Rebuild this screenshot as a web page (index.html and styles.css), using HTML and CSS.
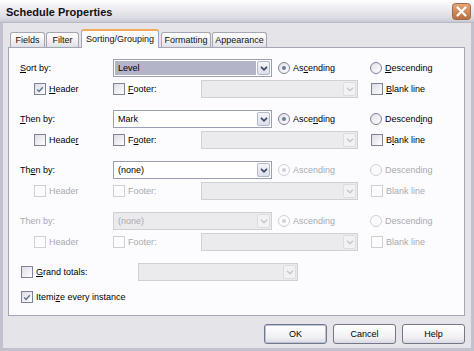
FILE: index.html
```html
<!DOCTYPE html>
<html lang="en">
<head>
    <meta charset="UTF-8">
    <title>Schedule Properties</title>
    <link rel="stylesheet" href="styles.css">
</head>
<body>
    <div class="dialog">
        <div class="titlebar">
            <span class="title">Schedule Properties</span>
            <span class="close-btn">
                <svg width="19" height="17" viewBox="0 0 19 17">
                    <defs>
                        <linearGradient id="cg" x1="0" y1="0" x2="0" y2="1">
                            <stop offset="0" stop-color="#e6a77a"/>
                            <stop offset="1" stop-color="#b86d3c"/>
                        </linearGradient>
                    </defs>
                    <rect x="0.5" y="0.5" width="18" height="16" rx="3" fill="url(#cg)" stroke="#9c6a4a"/>
                    <path d="M5.5 4.5 L13.5 12.5 M13.5 4.5 L5.5 12.5" stroke="#fff" stroke-width="2.2" stroke-linecap="round"/>
                </svg>
            </span>
        </div>

        <div class="body">
            <div class="tabs">
                <div class="tab" style="width: 35px">Fields</div>
                <div class="tab" style="width: 33px">Filter</div>
                <div class="tab active">Sorting/Grouping</div>
                <div class="tab" style="width: 50px">Formatting</div>
                <div class="tab" style="width: 55px">Appearance</div>
            </div>

            <div class="panel">
                <!-- sort by -->
                <div class="group">
                    <div class="main-row">
                        <span><u>S</u>ort by:</span>
                        <div class="combo selected">
                            <span class="combo-text">Level</span>
                            <span class="combo-arrow"><svg width="8" height="5" viewBox="0 0 8 5"><path d="M1 0.8 L4 3.8 L7 0.8" fill="none" stroke="currentColor" stroke-width="1.7"/></svg></span>
                        </div>
                        <label class="radio checked"><span class="dot"></span>As<u>c</u>ending</label>
                        <label class="radio"><span class="dot"></span><u>D</u>escending</label>
                    </div>
                    <div class="sub-row">
                        <label class="check checked"><span class="box"><svg width="11" height="11" viewBox="0 0 11 11"><path d="M2.5 5.5 L4.5 7.7 L8.6 3" fill="none" stroke="currentColor" stroke-width="1.6"/></svg></span><u>H</u>eader</label>
                        <label class="check"><span class="box"></span><u>F</u>ooter:</label>
                        <div class="combo disabled wide">
                            <span class="combo-text"></span>
                            <span class="combo-arrow"><svg width="8" height="5" viewBox="0 0 8 5"><path d="M1 0.8 L4 3.8 L7 0.8" fill="none" stroke="currentColor" stroke-width="1.5"/></svg></span>
                        </div>
                        <label class="check"><span class="box"></span><u>B</u>lank line</label>
                    </div>
                </div>

                <!-- then by 1 -->
                <div class="group">
                    <div class="main-row">
                        <span><u>T</u>hen by:</span>
                        <div class="combo">
                            <span class="combo-text">Mark</span>
                            <span class="combo-arrow"><svg width="8" height="5" viewBox="0 0 8 5"><path d="M1 0.8 L4 3.8 L7 0.8" fill="none" stroke="currentColor" stroke-width="1.7"/></svg></span>
                        </div>
                        <label class="radio checked"><span class="dot"></span>Asce<u>n</u>ding</label>
                        <label class="radio"><span class="dot"></span>Descend<u>i</u>ng</label>
                    </div>
                    <div class="sub-row">
                        <label class="check"><span class="box"></span>Heade<u>r</u></label>
                        <label class="check"><span class="box"></span>F<u>o</u>oter:</label>
                        <div class="combo disabled wide">
                            <span class="combo-text"></span>
                            <span class="combo-arrow"><svg width="8" height="5" viewBox="0 0 8 5"><path d="M1 0.8 L4 3.8 L7 0.8" fill="none" stroke="currentColor" stroke-width="1.5"/></svg></span>
                        </div>
                        <label class="check"><span class="box"></span>B<u>l</u>ank line</label>
                    </div>
                </div>

                <!-- then by 2 -->
                <div class="group">
                    <div class="main-row">
                        <span>Th<u>e</u>n by:</span>
                        <div class="combo">
                            <span class="combo-text">(none)</span>
                            <span class="combo-arrow"><svg width="8" height="5" viewBox="0 0 8 5"><path d="M1 0.8 L4 3.8 L7 0.8" fill="none" stroke="currentColor" stroke-width="1.7"/></svg></span>
                        </div>
                        <label class="radio checked off"><span class="dot"></span>Ascending</label>
                        <label class="radio off"><span class="dot"></span>Descending</label>
                    </div>
                    <div class="sub-row off">
                        <label class="check"><span class="box"></span>Header</label>
                        <label class="check"><span class="box"></span>Footer:</label>
                        <div class="combo disabled wide">
                            <span class="combo-text"></span>
                            <span class="combo-arrow"><svg width="8" height="5" viewBox="0 0 8 5"><path d="M1 0.8 L4 3.8 L7 0.8" fill="none" stroke="currentColor" stroke-width="1.5"/></svg></span>
                        </div>
                        <label class="check"><span class="box"></span>Blank line</label>
                    </div>
                </div>

                <!-- then by 3 -->
                <div class="group">
                    <div class="main-row off">
                        <span>Then by:</span>
                        <div class="combo disabled">
                            <span class="combo-text">(none)</span>
                            <span class="combo-arrow"><svg width="8" height="5" viewBox="0 0 8 5"><path d="M1 0.8 L4 3.8 L7 0.8" fill="none" stroke="currentColor" stroke-width="1.5"/></svg></span>
                        </div>
                        <label class="radio checked"><span class="dot"></span>Ascending</label>
                        <label class="radio"><span class="dot"></span>Descending</label>
                    </div>
                    <div class="sub-row off">
                        <label class="check"><span class="box"></span>Header</label>
                        <label class="check"><span class="box"></span>Footer:</label>
                        <div class="combo disabled wide">
                            <span class="combo-text"></span>
                            <span class="combo-arrow"><svg width="8" height="5" viewBox="0 0 8 5"><path d="M1 0.8 L4 3.8 L7 0.8" fill="none" stroke="currentColor" stroke-width="1.5"/></svg></span>
                        </div>
                        <label class="check"><span class="box"></span>Blank line</label>
                    </div>
                </div>

                <div class="grand-row">
                    <label class="check"><span class="box"></span><u>G</u>rand totals:</label>
                    <div class="combo disabled grand">
                        <span class="combo-text"></span>
                        <span class="combo-arrow"><svg width="8" height="5" viewBox="0 0 8 5"><path d="M1 0.8 L4 3.8 L7 0.8" fill="none" stroke="currentColor" stroke-width="1.5"/></svg></span>
                    </div>
                </div>

                <div class="itemize-row">
                    <label class="check checked"><span class="box"><svg width="11" height="11" viewBox="0 0 11 11"><path d="M2.5 5.5 L4.5 7.7 L8.6 3" fill="none" stroke="currentColor" stroke-width="1.6"/></svg></span>Itemi<u>z</u>e every instance</label>
                </div>
            </div>

            <div class="buttons">
                <button class="default">OK</button>
                <button>Cancel</button>
                <button>Help</button>
            </div>
        </div>
    </div>
</body>
</html>
```

FILE: styles.css
```css
body {
    margin: 0;
    font-family: "Liberation Sans", Arial, sans-serif;
    font-size: 9px;
    color: #000;
    background: #fff;
}
.dialog {
    width: 474px;
    height: 351px;
    display: flex;
    flex-direction: column;
    background: #e4e4e9;
}
.titlebar {
    height: 23px;
    flex-shrink: 0;
    display: flex;
    align-items: center;
    justify-content: space-between;
    padding: 0 3px 0 6px;
    box-sizing: border-box;
    background: linear-gradient(#ffffff, #f0f0f4 30%, #dcdce4 80%, #c9c9d4);
    border-bottom: 1px solid #b9b9c6;
}
.title {
    font-size: 11px;
    font-weight: bold;
    color: #111;
    padding-top: 1px;
}
.close-btn {
    display: flex;
    margin-top: 1px;
}
.body {
    flex: 1;
    display: flex;
    flex-direction: column;
    border: 3px solid #c2c2ce;
    border-top: 0;
    padding-top: 6px;
}
.tabs {
    display: flex;
    align-items: flex-end;
    height: 18px;
    padding-left: 7px;
    gap: 1px;
}
.tab {
    height: 15px;
    box-sizing: border-box;
    display: flex;
    align-items: center;
    justify-content: center;
    border: 1px solid #a5a5b4;
    border-bottom: 0;
    border-radius: 3px 3px 0 0;
    background: linear-gradient(#ffffff, #ececf0 70%, #dedee6);
    color: #111;
}
.tab.active {
    width: 78px;
    height: 19px;
    margin: 0 1px -1px;
    padding-bottom: 2px;
    position: relative;
    z-index: 1;
    background: #fcfcfe;
    border-top: 2px solid #f2a85a;
    border-color: #f2a85a #a5a5b4 #fcfcfe;
}
.panel {
    width: 457px;
    height: 269px;
    margin-left: 5px;
    box-sizing: border-box;
    border: 1px solid #a5a5b4;
    background: #fcfcfe;
    padding: 11px 0 0 11px;
}
.group {
    margin-bottom: 12px;
}
.main-row {
    display: grid;
    grid-template-columns: 93px 165px 92px auto;
    align-items: center;
    height: 18px;
}
.sub-row {
    display: grid;
    grid-template-columns: 79px 88px 170px auto;
    align-items: center;
    height: 18px;
    margin-top: 3px;
    padding-left: 14px;
}
.off {
    color: #a9a9b0;
}
u {
    text-underline-offset: 1px;
}

/* combo boxes */
.combo {
    width: 159px;
    height: 18px;
    box-sizing: border-box;
    border: 1px solid #9a9fb4;
    background: #fff;
    display: flex;
    align-items: stretch;
    padding: 1px;
}
.combo.wide {
    width: 157px;
}
.combo.grand {
    width: 160px;
}
.combo-text {
    flex: 1;
    padding-left: 3px;
    display: flex;
    align-items: center;
}
.combo.selected .combo-text {
    background: #b4b4c8;
}
.combo-arrow {
    width: 13px;
    margin-left: 1px;
    box-sizing: border-box;
    display: flex;
    align-items: center;
    justify-content: center;
    border: 1px solid #b4b9cc;
    border-radius: 2px;
    background: linear-gradient(#f4f5f9, #dcdfea);
    color: #3d4a66;
}
.combo.disabled {
    border-color: #cfcfd6;
    background: #ebebee;
    color: #a9a9b0;
}
.combo.disabled .combo-arrow {
    border-color: #dcdce2;
    background: #f2f2f5;
    color: #c6c6ce;
}

/* radios */
.radio {
    display: flex;
    align-items: center;
}
.dot {
    width: 12px;
    height: 12px;
    box-sizing: border-box;
    border: 1px solid #7f8398;
    border-radius: 50%;
    background: linear-gradient(135deg, #e0e0e8, #ffffff);
    margin-right: 3px;
    display: flex;
    align-items: center;
    justify-content: center;
}
.radio.checked .dot::after {
    content: "";
    width: 4px;
    height: 4px;
    border-radius: 50%;
    background: #6d7f94;
}
.off .dot {
    border-color: #cfcfd8;
    background: #fcfcfe;
}
.off .radio.checked .dot::after,
.radio.off.checked .dot::after {
    background: #d0d0d8;
}

/* checkboxes */
.check {
    display: flex;
    align-items: center;
}
.box {
    width: 12px;
    height: 12px;
    box-sizing: border-box;
    border: 1px solid #7f8398;
    background: linear-gradient(135deg, #dcdce4, #ffffff);
    margin-right: 3px;
    display: flex;
    align-items: center;
    justify-content: center;
    color: #5e7590;
}
.off .box {
    border-color: #cfcfd8;
    background: #fcfcfe;
}
.grand-row {
    display: grid;
    grid-template-columns: 118px 160px;
    align-items: center;
    height: 18px;
    margin-top: 2px;
}
.grand-row .check,
.itemize-row .check {
    margin-left: 1px;
}
.itemize-row {
    height: 14px;
    display: flex;
    align-items: center;
    margin-top: 9px;
}

/* bottom buttons */
.buttons {
    display: flex;
    justify-content: flex-end;
    gap: 6px;
    margin-top: 8px;
    padding-right: 6px;
}
button {
    width: 63px;
    height: 20px;
    font-family: inherit;
    font-size: 9px;
    color: #000;
    border: 1px solid #767689;
    border-radius: 3px;
    background: linear-gradient(#ffffff, #f0f0f3 70%, #d9d9e1);
    padding: 0;
}
button.default {
    box-shadow: inset 0 0 0 1px #b8c4dc;
}
```
